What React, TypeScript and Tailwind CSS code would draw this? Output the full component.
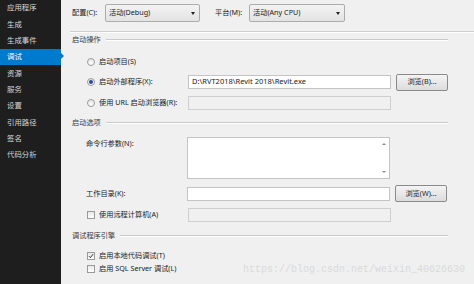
import React from 'react';

const FONT = 'font-["Noto_Sans","Noto_Sans_CJK_SC",sans-serif]';

const NAV = ['应用程序', '生成', '生成事件', '调试', '资源', '服务', '设置', '引用路径', '签名', '代码分析'];

const Select = ({ value, width }: { value: string; width: string }) => (
  <div
    className={`${width} h-[18px] flex items-center justify-between pl-[3px] pr-[4px] border border-[#acacac] rounded-[2px] bg-gradient-to-b from-[#f3f3f3] to-[#e3e3e3] text-[#1a1a1a]`}
  >
    <span>{value}</span>
    <span className="w-0 h-0 border-l-[2.5px] border-r-[2.5px] border-t-[3px] border-l-transparent border-r-transparent border-t-[#222]" />
  </div>
);

const GroupHeader = ({ title }: { title: string }) => (
  <div className="h-[14px] flex items-center gap-[5px] text-[#3a3a3a]">
    <span>{title}</span>
    <div className="flex-1 mr-[26px] h-[2px] border-t border-[#c9c9c9] border-b border-b-white" />
  </div>
);

const Radio = ({ checked }: { checked?: boolean }) => (
  <span className="w-[8px] h-[8px] rounded-full border border-[#9a9a9a] bg-gradient-to-b from-[#e6e6e6] to-white flex items-center justify-center">
    {checked && <span className="w-[4px] h-[4px] rounded-full bg-[#2b4a9a]" />}
  </span>
);

const Checkbox = ({ checked }: { checked?: boolean }) => (
  <span className="w-[8px] h-[8px] border border-[#9a9a9a] bg-gradient-to-b from-[#e8e8e8] to-white flex items-center justify-center">
    {checked && (
      <svg width="6" height="6" viewBox="0 0 6 6">
        <path d="M1 3.2 L2.4 4.7 L5 1.2" stroke="#333" strokeWidth="1" fill="none" />
      </svg>
    )}
  </span>
);

const Input = ({ value, disabled }: { value?: string; disabled?: boolean }) => (
  <div
    className={`w-[203px] h-[14px] flex items-center px-[3px] border ${
      disabled ? 'border-[#cfcfcf] bg-[#f0f0f0]' : 'border-[#c4c4c4] bg-white'
    } text-[#1a1a1a] text-[7.5px]`}
  >
    {value}
  </div>
);

const Button = ({ label }: { label: string }) => (
  <div className="ml-[5px] w-[52px] h-[17px] flex items-center justify-center border border-[#8a8a8a] rounded-[2px] bg-gradient-to-b from-[#f4f4f4] to-[#dcdcdc] text-[#1a1a1a]">
    {label}
  </div>
);

export default function App() {
  return (
    <div className={`w-[474px] h-[284px] flex overflow-hidden relative ${FONT} text-[7.2px] leading-none`}>
      {/* Sidebar */}
      <div className="w-[61px] shrink-0 bg-[#1e1e1e] flex flex-col text-[7.4px]">
        {NAV.map((n) => (
          <div
            key={n}
            className={`h-[16.3px] flex items-center pl-[7px] relative ${
              n === '调试' ? 'bg-[#007acc] text-white' : 'text-[#d6d6d6]'
            }`}
          >
            {n}
            {n === '调试' && (
              <span className="absolute right-[-3px] top-[4.5px] w-0 h-0 border-t-[3.5px] border-b-[3.5px] border-l-[3px] border-t-transparent border-b-transparent border-l-[#007acc]" />
            )}
          </div>
        ))}
      </div>

      {/* Content */}
      <div className="flex-1 bg-[#f0f0f0] flex flex-col text-[#1a1a1a]">
        <div className="h-[27px] pt-[4px] pl-[11px] flex items-start">
          <div className="h-[18px] flex items-center w-[33px]">配置(C):</div>
          <Select value="活动(Debug)" width="w-[95px]" />
          <div className="h-[18px] flex items-center ml-[15px] w-[34px]">平台(M):</div>
          <Select value="活动(Any CPU)" width="w-[96px]" />
        </div>
        <div className="h-[4px]" />
        <div className="ml-[9px] h-[2px] border-t border-[#cfcfcf] border-b border-b-white" />

        <div className="pl-[11px] flex flex-col">
          <GroupHeader title="启动操作" />
          <div className="h-[8px]" />
          <div className="h-[14px] flex items-center pl-[15px] gap-[4px]">
            <Radio />
            <span>启动项目(S)</span>
          </div>
          <div className="h-[4px]" />
          <div className="h-[18px] flex items-center pl-[15px]">
            <div className="w-[101px] flex items-center gap-[4px]">
              <Radio checked />
              <span>启动外部程序(X):</span>
            </div>
            <Input value={'D:\\RVT2018\\Revit 2018\\Revit.exe'} />
            <Button label="浏览(B)..." />
          </div>
          <div className="h-[5px]" />
          <div className="h-[14px] flex items-center pl-[15px]">
            <div className="w-[101px] flex items-center gap-[4px] whitespace-nowrap">
              <Radio />
              <span>使用 URL 启动浏览器(R):</span>
            </div>
            <Input disabled />
          </div>
          <div className="h-[6px]" />
          <GroupHeader title="启动选项" />
          <div className="h-[7px]" />
          <div className="h-[42px] flex items-start pl-[14px]">
            <div className="w-[101px] pt-[3px]">命令行参数(N):</div>
            <div className="w-[203px] h-[42px] border border-[#c4c4c4] bg-white flex justify-end">
              <div className="w-[10px] flex flex-col items-center justify-between py-[5px]">
                <span className="w-0 h-0 border-l-[2px] border-r-[2px] border-b-[2.5px] border-l-transparent border-r-transparent border-b-[#8a8a8a]" />
                <span className="w-0 h-0 border-l-[2px] border-r-[2px] border-t-[2.5px] border-l-transparent border-r-transparent border-t-[#8a8a8a]" />
              </div>
            </div>
          </div>
          <div className="h-[6px]" />
          <div className="h-[17px] flex items-center pl-[14px]">
            <div className="w-[101px]">工作目录(K):</div>
            <Input />
            <Button label="浏览(W)..." />
          </div>
          <div className="h-[6px]" />
          <div className="h-[14px] flex items-center pl-[15px]">
            <div className="w-[101px] flex items-center gap-[4px]">
              <Checkbox />
              <span>使用远程计算机(A)</span>
            </div>
            <Input disabled />
          </div>
          <div className="h-[7px]" />
          <GroupHeader title="调试程序引擎" />
          <div className="h-[6px]" />
          <div className="h-[13px] flex items-center pl-[15px] gap-[4px]">
            <Checkbox checked />
            <span>启用本地代码调试(T)</span>
          </div>
          <div className="h-[13px] flex items-center pl-[15px] gap-[4px]">
            <Checkbox />
            <span>启用 SQL Server 调试(L)</span>
          </div>
        </div>
      </div>

      {/* watermark */}
      <div className='absolute left-[243px] top-[265px] font-["Liberation_Mono",monospace] text-[10px] text-[#dadada]'>
        https://blog.csdn.net/weixin_40626630
      </div>
    </div>
  );
}
